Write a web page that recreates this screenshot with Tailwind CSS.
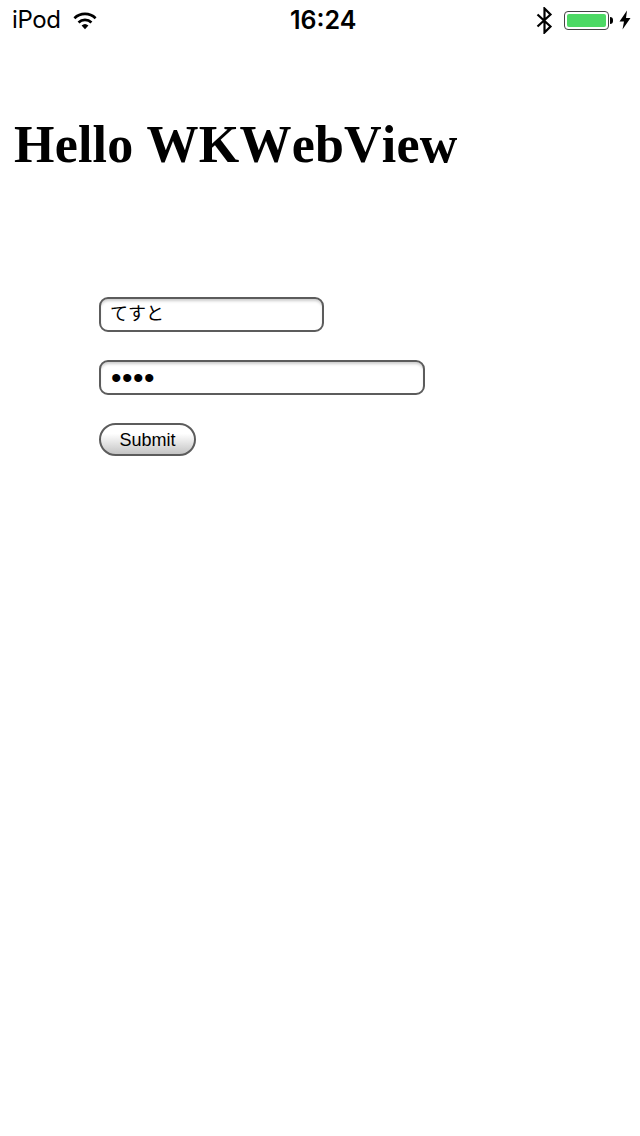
<!DOCTYPE html>
<html><head><meta charset="utf-8"><script src="https://cdn.jsdelivr.net/npm/@tailwindcss/browser@4"></script></head>
<body class="bg-white text-black w-[640px] h-[1136px] overflow-hidden">
<div class="relative h-10 flex items-center justify-between font-['Inter',sans-serif]">
<div class="flex items-center gap-[12px] pl-3"><span class="text-[24px] leading-none tracking-[-0.4px]">iPod</span>
<svg width="24" height="19" viewBox="0 0 26 20"><path d="M0.500 6.500a18 18 0 0 1 25 0l-2 2.200a15 15 0 0 0-21 0z M5 11a11.500 11.500 0 0 1 16 0l-2 2.200a8.500 8.500 0 0 0-12 0z M9.300 15.500a5.500 5.500 0 0 1 7.400 0L13 19.500z"/></svg></div>
<span class="absolute left-[290px] top-[6px] text-[25px] leading-[28px] font-semibold">16:24</span>
<div class="flex items-center pr-[9px]">
<svg class="mr-[11px]" width="17" height="27" viewBox="0 0 17 27" fill="none" stroke="black" stroke-width="2.200"><path d="M1.500 7.500l13 12-6 6V1.500l6 6-13 12"/></svg>
<div class="relative mr-[10px] w-[45px] h-[19px] border border-[#444] rounded-[4px] p-[2px]"><div class="h-full bg-[#4cd964] rounded-[2px]"></div><div class="absolute right-[-5px] top-[5px] w-[3px] h-[7px] bg-black rounded-r-sm"></div></div>
<svg width="12" height="20" viewBox="0 0 12 20"><path d="M8 0.500L0.500 11.500h4.500L3.500 19.500 11.500 8H7z"/></svg>
</div></div>
<div class="pl-[14px] pt-[72px] font-['Liberation_Serif',serif]"><h1 class="text-[52px] leading-[66px] font-bold [font-kerning:none] tracking-[0.2px]">Hello WKWebView</h1></div>
<form class="pl-[99px] pt-[119px] flex flex-col items-start font-['Liberation_Sans','Noto_Sans_CJK_JP',sans-serif]">
<div class="w-[225px] h-[35px] border-2 border-[#5c5c5c] rounded-[9px] pl-[9px] text-[18px] leading-[30px] shadow-[inset_0_3px_3px_-1px_#ccc]">てすと</div>
<div class="mt-[28px] w-[326px] h-[35px] border-2 border-[#5c5c5c] rounded-[9px] pl-[10px] text-[30px] leading-[31px] tracking-[0.500px] shadow-[inset_0_3px_3px_-1px_#ccc]">••••</div>
<button type="button" class="mt-[28px] w-[97px] h-[33px] border-2 border-[#5c5c5c] rounded-full text-[18px] leading-[31px] bg-gradient-to-b from-white from-30% to-[#c4c4c4]">Submit</button>
</form>
</body></html>
